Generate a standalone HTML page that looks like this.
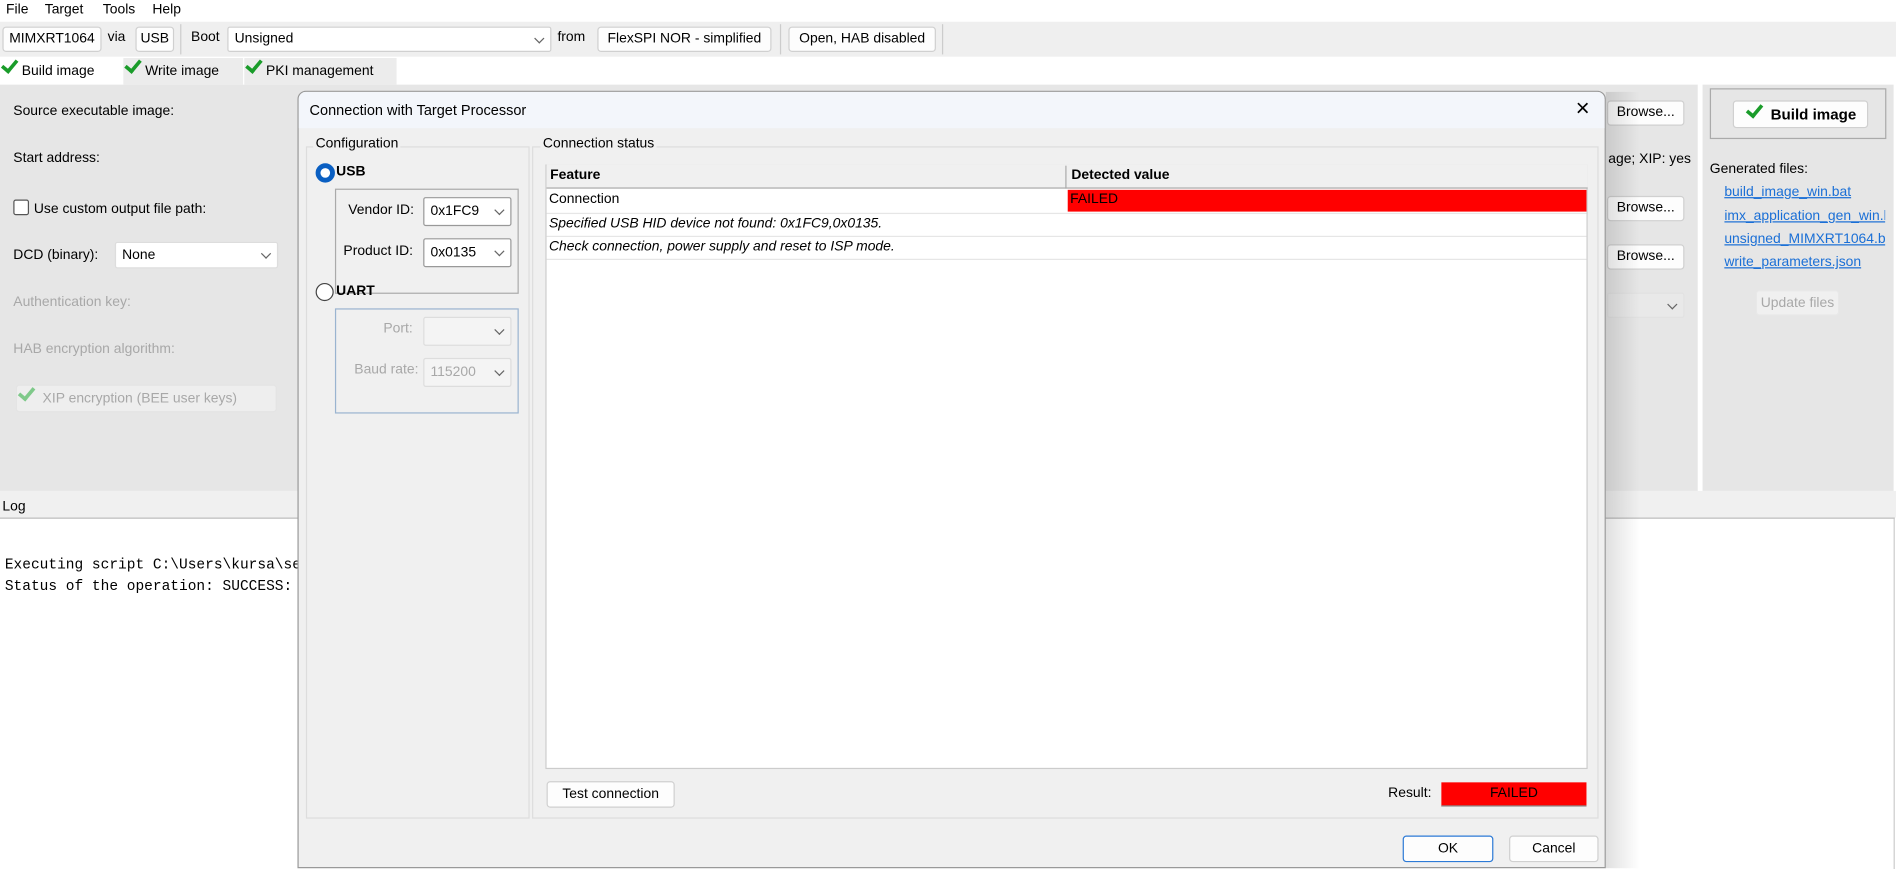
<!DOCTYPE html>
<html><head><meta charset="utf-8"><style>
html,body{margin:0;padding:0;width:1896px;height:868px;overflow:hidden;background:#fff}
#w{position:absolute;left:0;top:0;width:1568px;height:718px;transform:scale(1.2092);transform-origin:0 0;font-family:"Liberation Sans",sans-serif;font-size:11.5px;color:#000}
.a{position:absolute;white-space:nowrap}
.btn{position:absolute;background:#fdfdfd;border:1px solid #d0d0d0;border-radius:3px;box-sizing:border-box;text-align:center}
.cb{position:absolute;background:#fff;border:1px solid #bbb;border-radius:2px;box-sizing:border-box;padding-left:5px}
.cb:after{content:"";position:absolute;right:6px;top:50%;width:5px;height:5px;border-right:1px solid #666;border-bottom:1px solid #666;transform:translateY(-70%) rotate(45deg)}
.dis{color:#a8a8a8}
.lnk{color:#1a6fd6;text-decoration:underline}
.chk{display:inline-block;width:5px;height:10px;border-right:3px solid #1a9c2a;border-bottom:3px solid #1a9c2a;transform:rotate(40deg);margin:0 6px 0 4px;position:relative;top:-2px}
</style></head><body><div id="w">
<div class="a" style="left:5px;top:2px">File</div>
<div class="a" style="left:37px;top:2px">Target</div>
<div class="a" style="left:85px;top:2px">Tools</div>
<div class="a" style="left:126px;top:2px">Help</div>
<div class="a" style="left:0;top:18px;width:1568px;height:29px;background:#efefef"></div>
<div class="btn" style="left:2px;top:22px;width:82px;height:21px;line-height:19px">MIMXRT1064</div>
<div class="a" style="left:89px;top:25px">via</div>
<div class="btn" style="left:112px;top:22px;width:32px;height:21px;line-height:19px">USB</div>
<div class="a" style="left:149px;top:20px;width:1px;height:25px;background:#ccc"></div>
<div class="a" style="left:158px;top:25px">Boot</div>
<div class="cb" style="left:188px;top:22px;width:268px;height:21px;line-height:19px;border-color:#d0d0d0">Unsigned</div>
<div class="a" style="left:461px;top:25px">from</div>
<div class="btn" style="left:494px;top:22px;width:144px;height:21px;line-height:19px">FlexSPI NOR - simplified</div>
<div class="a" style="left:645px;top:20px;width:1px;height:25px;background:#ccc"></div>
<div class="btn" style="left:652px;top:22px;width:122px;height:21px;line-height:19px">Open, HAB disabled</div>
<div class="a" style="left:779px;top:20px;width:1px;height:25px;background:#ccc"></div>
<div class="a" style="left:0;top:47px;width:1568px;height:24px;background:#fff"></div>
<div class="a" style="left:0;top:48px;width:101px;height:23px;background:#fff;line-height:22px"><span class="chk"></span>Build image</div>
<div class="a" style="left:102px;top:48px;width:99px;height:22px;background:#ececec;line-height:22px"><span class="chk"></span>Write image</div>
<div class="a" style="left:202px;top:48px;width:126px;height:22px;background:#ececec;line-height:22px"><span class="chk"></span>PKI management</div>
<div class="a" style="left:0;top:70px;width:1404px;height:336px;background:#e6e6e6"></div>
<div class="a" style="left:1408px;top:70px;width:158px;height:336px;background:#e6e6e6"></div>
<div class="a" style="left:11px;top:86px">Source executable image:</div>
<div class="a" style="left:11px;top:125px">Start address:</div>
<div class="a" style="left:11px;top:165px"><span style="display:inline-block;width:11px;height:11px;border:1px solid #555;border-radius:2px;background:#fff;vertical-align:-2px;margin-right:4px"></span>Use custom output file path:</div>
<div class="a" style="left:11px;top:205px">DCD (binary):</div>
<div class="cb" style="left:95px;top:200px;width:135px;height:22px;line-height:21px;border-color:#ddd">None</div>
<div class="a dis" style="left:11px;top:244px">Authentication key:</div>
<div class="a dis" style="left:11px;top:283px">HAB encryption algorithm:</div>
<div class="btn dis" style="left:13px;top:318px;width:216px;height:23px;line-height:22px;text-align:left;background:#eee;border-color:#e4e4e4"><span class="chk" style="border-color:#7fc98a"></span>&nbsp;XIP encryption (BEE user keys)</div>
<div class="btn" style="left:1329px;top:83px;width:64px;height:21px;line-height:19px">Browse...</div>
<div class="a" style="left:1330px;top:126px">age; XIP: yes</div>
<div class="btn" style="left:1329px;top:162px;width:64px;height:21px;line-height:19px">Browse...</div>
<div class="btn" style="left:1329px;top:202px;width:64px;height:21px;line-height:19px">Browse...</div>
<div class="cb" style="left:1329px;top:242px;width:64px;height:21px;background:#e9e9e9;border-color:#e2e2e2"></div>
<div class="a" style="left:1414px;top:73px;width:146px;height:42px;border:1px solid #aaa;box-sizing:border-box"></div>
<div class="btn" style="left:1433px;top:83px;width:112px;height:23px;line-height:22px;font-weight:bold;font-size:12.5px"><span class="chk"></span>&nbsp;Build image</div>
<div class="a" style="left:1414px;top:134px">Generated files:</div>
<div class="a lnk" style="left:1426px;top:153px">build_image_win.bat</div>
<div class="a lnk" style="left:1426px;top:173px;width:133px;overflow:hidden">imx_application_gen_win.bat</div>
<div class="a lnk" style="left:1426px;top:192px;width:133px;overflow:hidden">unsigned_MIMXRT1064.bin</div>
<div class="a lnk" style="left:1426px;top:211px">write_parameters.json</div>
<div class="btn dis" style="left:1452px;top:240px;width:69px;height:21px;line-height:20px;background:#f0f0f0;border-color:#e8e8e8">Update files</div>
<div class="a" style="left:0;top:406px;width:1568px;height:22px;background:#f0f0f0"></div>
<div class="a" style="left:2px;top:413px">Log</div>
<div class="a" style="left:0;top:428px;width:1566px;height:290px;background:#fff;border-top:1px solid #bbb;border-right:1px solid #ccc"></div>
<div class="a" style="left:4px;top:458px;font-family:'Liberation Mono',monospace;font-size:12px;line-height:18px">Executing script C:\Users\kursa\se<br>Status of the operation: SUCCESS:</div>
<div class="a" style="left:1328px;top:76px;width:28px;height:642px;background:linear-gradient(90deg,rgba(0,0,0,.12),rgba(0,0,0,0))"></div>
<div class="a" style="left:246px;top:75px;width:1082px;height:643px;background:#f0f0f0;border:1px solid #999;border-radius:7px 7px 0 0;box-sizing:border-box;overflow:hidden">
 <div class="a" style="left:0;top:0;width:1082px;height:30px;background:#f3f6fb"></div>
 <div class="a" style="left:9px;top:8px;font-size:12px">Connection with Target Processor</div>
 <div class="a" style="left:1056px;top:3px;font-size:20px;font-weight:300">×</div>
 <div class="a" style="left:6px;top:45px;width:185px;height:556px;border:1px solid #ddd;box-sizing:border-box"></div>
 <div class="a" style="left:12px;top:37px;background:#f0f0f0;padding:0 2px">Configuration</div>
 <div class="a" style="left:14px;top:59px;width:8px;height:8px;border:4px solid #0a5fc2;border-radius:50%;background:#fff"></div>
 <div class="a" style="left:31px;top:60px;font-weight:bold">USB</div>
 <div class="a" style="left:30px;top:80px;width:152px;height:87px;border:1px solid #aaa;box-sizing:border-box"></div>
 <div class="a" style="left:41px;top:92px">Vendor ID:</div>
 <div class="cb" style="left:103px;top:87px;width:73px;height:24px;line-height:22px;border-color:#999">0x1FC9</div>
 <div class="a" style="left:37px;top:126px">Product ID:</div>
 <div class="cb" style="left:103px;top:121px;width:73px;height:24px;line-height:22px;border-color:#999">0x0135</div>
 <div class="a" style="left:14px;top:158px;width:13px;height:13px;border:1px solid #444;border-radius:50%;background:#fff"></div>
 <div class="a" style="left:31px;top:159px;font-weight:bold">UART</div>
 <div class="a" style="left:30px;top:179px;width:152px;height:87px;border:1px solid #9ab4d0;box-sizing:border-box"></div>
 <div class="a dis" style="left:70px;top:190px">Port:</div>
 <div class="cb" style="left:103px;top:186px;width:73px;height:24px;border-color:#ddd;background:#f4f4f4"></div>
 <div class="a dis" style="left:46px;top:224px">Baud rate:</div>
 <div class="cb dis" style="left:103px;top:220px;width:73px;height:24px;line-height:22px;border-color:#ddd;background:#f4f4f4">115200</div>
 <div class="a" style="left:193px;top:45px;width:882px;height:556px;border:1px solid #ddd;box-sizing:border-box"></div>
 <div class="a" style="left:200px;top:37px;background:#f0f0f0;padding:0 2px">Connection status</div>
 <div class="a" style="left:204px;top:60px;width:862px;height:500px;background:#fff;border:1px solid #ccc;box-sizing:border-box"></div>
 <div class="a" style="left:205px;top:60px;width:861px;height:20px;background:#f0f0f0;border-bottom:1px solid #aaa;box-sizing:border-box"></div>
 <div class="a" style="left:634px;top:61px;width:1px;height:19px;background:#aaa"></div>
 <div class="a" style="left:208px;top:63px;font-weight:bold">Feature</div>
 <div class="a" style="left:639px;top:63px;font-weight:bold">Detected value</div>
 <div class="a" style="left:207px;top:83px">Connection</div>
 <div class="a" style="left:636px;top:81px;width:429px;height:18px;background:#ff0000"></div>
 <div class="a" style="left:638px;top:83px">FAILED</div>
 <div class="a" style="left:205px;top:100px;width:860px;height:1px;background:#e6e6e6"></div>
 <div class="a" style="left:207px;top:103px;font-style:italic">Specified USB HID device not found: 0x1FC9,0x0135.</div>
 <div class="a" style="left:205px;top:119px;width:860px;height:1px;background:#e6e6e6"></div>
 <div class="a" style="left:207px;top:122px;font-style:italic">Check connection, power supply and reset to ISP mode.</div>
 <div class="a" style="left:205px;top:138px;width:860px;height:1px;background:#e6e6e6"></div>
 <div class="btn" style="left:205px;top:570px;width:106px;height:22px;line-height:20px">Test connection</div>
 <div class="a" style="left:901px;top:574px">Result:</div>
 <div class="a" style="left:945px;top:571px;width:120px;height:20px;background:#ff0000;border-bottom:1px solid #888;box-sizing:border-box;text-align:center;line-height:18px">FAILED</div>
 <div class="btn" style="left:913px;top:615px;width:75px;height:22px;line-height:20px;border:1.5px solid #2d7ad6">OK</div>
 <div class="btn" style="left:1001px;top:615px;width:74px;height:22px;line-height:20px">Cancel</div>
</div>
</div></body></html>
